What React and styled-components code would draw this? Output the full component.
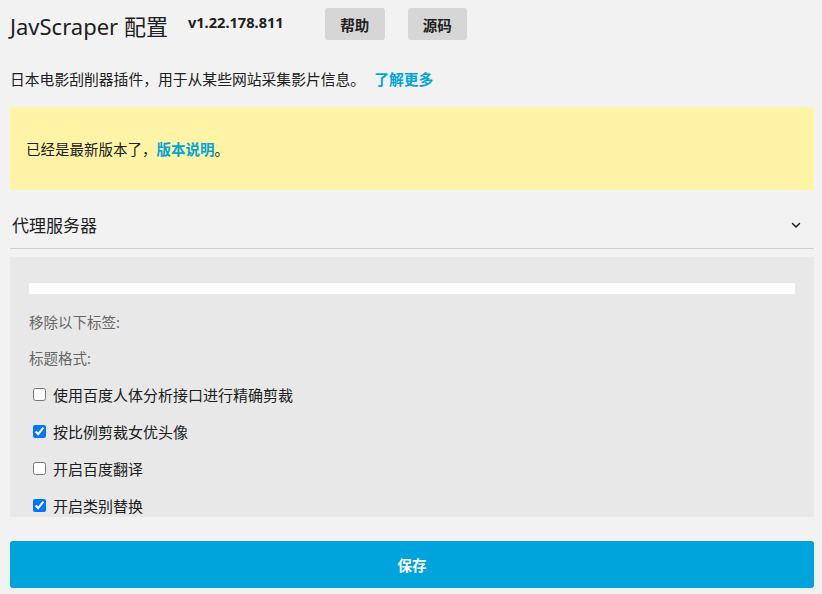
import styled, { createGlobalStyle } from "styled-components";

const Global = createGlobalStyle`
	html, body {
		margin: 0;
		padding: 0;
		background: #f2f2f2;
		font-family: "Noto Sans", "Noto Sans CJK SC", sans-serif;
		color: #202020;
	}
	* { box-sizing: border-box; }
`;

const Page = styled.div`
	padding: 0 8px 0 10px;
	width: 822px;
	height: 594px;
	overflow: hidden;
`;

const Header = styled.div`
	display: flex;
	align-items: center;
	height: 54px;
	padding-bottom: 2px;
`;

const Title = styled.h1`
	margin: 0;
	font-size: 22px;
	font-weight: 400;
	line-height: 1;
`;

const Version = styled.span`
	margin-left: 20px;
	font-size: 14.6px;
	font-weight: 700;
	margin-top: -8px;
	margin-right: 41px;
`;

const HeaderButton = styled.button`
	border: 0;
	border-radius: 3px;
	background: #d6d6d6;
	color: #202020;
	font-family: inherit;
	font-size: 14.5px;
	font-weight: 700;
	height: 32px;
	width: ${(p) => p.$width}px;
	margin-right: 23px;
	margin-top: -4px;
	padding: 0;
`;

const Intro = styled.p`
	margin: 15px 0 18px;
	font-size: 14.8px;
	line-height: 20px;
`;

const Link = styled.a`
	color: #00a4dc;
	font-weight: 700;
	text-decoration: none;
	margin-left: ${(p) => p.$gap || 0}px;
`;

const Notice = styled.div`
	background: #fff3a5;
	border-radius: 3px;
	height: 83px;
	padding: 0 16px;
	display: flex;
	align-items: center;
	font-size: 14.5px;
`;

const Collapse = styled.div`
	margin-top: 11px;
	height: 48px;
	display: flex;
	align-items: center;
	justify-content: space-between;
	border-bottom: 1px solid #cfcfcf;
	padding: 0 12px 0 2px;
	font-size: 17px;
`;

const Panel = styled.div`
	margin-top: 8px;
	background: #e8e8e8;
	height: 260px;
	overflow: hidden;
	padding: 26px 19px 0;
`;

const Bar = styled.div`
	height: 11px;
	background: #fff;
	margin-bottom: 19px;
`;

const FieldLabel = styled.div`
	color: #666;
	font-size: 14.5px;
	line-height: 18px;
	margin-bottom: 18px;
`;

const CheckRow = styled.label`
	display: flex;
	align-items: center;
	gap: 7px;
	height: 18px;
	margin-bottom: 19px;
	font-size: 15px;
	padding-left: 4px;

	input {
		margin: 0;
		width: 13px;
		height: 13px;
	}
`;

const SaveButton = styled.button`
	margin-top: 24px;
	width: 100%;
	height: 47px;
	border: 0;
	border-radius: 3px;
	background: #00a4dc;
	color: #fff;
	font-family: inherit;
	font-size: 14.5px;
	font-weight: 700;
`;

const checks = [
	{ label: "使用百度人体分析接口进行精确剪裁", checked: false },
	{ label: "按比例剪裁女优头像", checked: true },
	{ label: "开启百度翻译", checked: false },
	{ label: "开启类别替换", checked: true },
];

function Chevron() {
	return (
		<svg width="12" height="12" viewBox="0 0 24 24" fill="none" stroke="#202020" strokeWidth="3" strokeLinecap="round" strokeLinejoin="round">
			<path d="M5 9l7 7 7-7" />
		</svg>
	);
}

export default function App() {
	return (
		<>
			<Global />
			<Page>
				<Header>
					<Title>JavScraper 配置</Title>
					<Version>v1.22.178.811</Version>
					<HeaderButton $width={60}>帮助</HeaderButton>
					<HeaderButton $width={59}>源码</HeaderButton>
				</Header>
				<Intro>
					日本电影刮削器插件，用于从某些网站采集影片信息。
					<Link href="#" $gap={9}>了解更多</Link>
				</Intro>
				<Notice>
					已经是最新版本了，<Link href="#">版本说明</Link>。
				</Notice>
				<Collapse>
					<span>代理服务器</span>
					<Chevron />
				</Collapse>
				<Panel>
					<Bar />
					<FieldLabel>移除以下标签:</FieldLabel>
					<FieldLabel>标题格式:</FieldLabel>
					{checks.map((c) => (
						<CheckRow key={c.label}>
							<input type="checkbox" defaultChecked={c.checked} />
							{c.label}
						</CheckRow>
					))}
				</Panel>
				<SaveButton>保存</SaveButton>
			</Page>
		</>
	);
}
